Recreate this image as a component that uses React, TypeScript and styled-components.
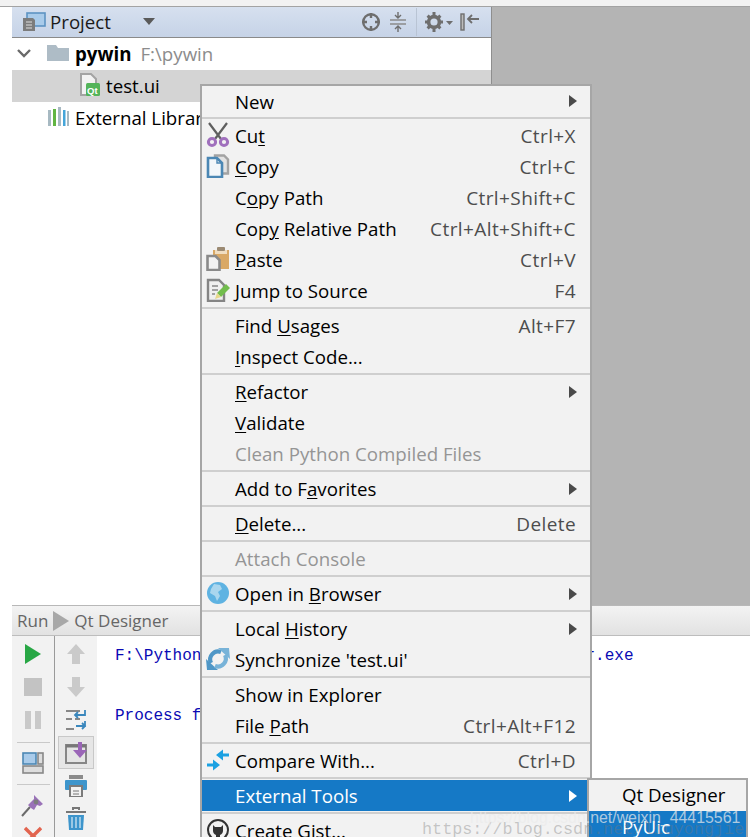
import React from "react";
import styled, { createGlobalStyle } from "styled-components";

const Global = createGlobalStyle`
  html, body { margin: 0; padding: 0; background: #fff; }
  body { font-family: "Open Sans", "Liberation Sans", sans-serif; }
  u { text-underline-offset: 2px; text-decoration-thickness: 1px; }
`;

const FONT = `"Open Sans", "Liberation Sans", sans-serif`;

const Page = styled.div`
  position: relative;
  width: 750px;
  height: 837px;
  overflow: hidden;
  background: #fff;
  font-family: ${FONT};
  font-size: 18.7px;
  color: #000;
`;
const TopStrip = styled.div`
  height: 6px;
  background: #f2f2f2;
`;
const Workspace = styled.div`
  display: flex;
  height: 599px;
  padding-left: 12px;
  border-top: 1px solid #a3a3a3;
  box-sizing: border-box;
`;
const ProjectPanel = styled.section`
  width: 479px;
  background: #fff;
  border-right: 1px solid #8e8e8e;
`;
const ProjectHeader = styled.header`
  height: 30px;
  display: flex;
  align-items: center;
  background: linear-gradient(#d6e0ef, #c6d3e7);
  border-bottom: 1px solid #8a8a8a;
`;
const HeaderIcons = styled.div`
  display: flex;
  align-items: center;
  margin-left: auto;
  padding-right: 11px;
  gap: 7px;
  color: #6e6e6e;
`;
const HeaderDivider = styled.span`
  width: 1px;
  height: 28px;
  background: #b9c4d4;
  margin: 0 1px;
`;
const HeaderTitle = styled.span`
  margin-left: 4px;
  width: 93px;
  color: #1a1a1a;
  line-height: 30px;
`;
const ProjectGlyph = styled.span`
  display: flex;
  margin-left: 10px;
`;
const TreeRow = styled.div<{ $selected?: boolean; $indent: number; $gap?: number }>`
  height: 32px;
  box-sizing: border-box;
  padding-bottom: 2px;
  display: flex;
  align-items: center;
  gap: ${(p) => p.$gap ?? 6}px;
  padding-left: ${(p) => p.$indent}px;
  background: ${(p) => (p.$selected ? "#d4d4d4" : "transparent")};
  white-space: nowrap;
`;
const ChevronGap = styled.span`
  width: 3px;
  flex: none;
`;
const Strong = styled.b`
  font-weight: 700;
`;
const PathHint = styled.span`
  color: #8c8c8c;
  margin-left: 3px;
`;
const GrayArea = styled.div`
  flex: 1;
  background: #b4b4b4;
`;
const RunPanel = styled.section`
  margin-left: 12px;
  border-top: 1px solid #b8b8b8;
`;
const RunHeader = styled.header`
  height: 30px;
  box-sizing: border-box;
  display: flex;
  align-items: center;
  gap: 5px;
  padding-left: 5px;
  color: #666;
  font-size: 17px;
  background: linear-gradient(#f3f3f3, #e2e2e2);
  border-bottom: 1px solid #bdbdbd;
`;
const RunBody = styled.div`
  display: flex;
  height: 202px;
`;
const ToolColumn = styled.div<{ $border?: boolean }>`
  width: 42px;
  flex: none;
  display: flex;
  flex-direction: column;
  align-items: center;
  padding-top: 1px;
  background: #f2f2f2;
  border-right: ${(p) => (p.$border ? "1px solid #9a9a9a" : "none")};
`;
const ToolSlot = styled.span<{ $h?: number; $active?: boolean }>`
  display: flex;
  align-items: center;
  justify-content: center;
  flex: none;
  height: ${(p) => p.$h ?? 33}px;
  width: ${(p) => (p.$active ? "36px" : "100%")};
  box-sizing: border-box;
  background: ${(p) => (p.$active ? "#e6e6e6" : "transparent")};
  border: ${(p) => (p.$active ? "1px solid #c8c8c8" : "none")};
`;
const ToolSeparator = styled.span<{ $top?: number }>`
  width: 33px;
  height: 1px;
  background: #c9c9c9;
  flex: none;
  margin: ${(p) => p.$top ?? 6}px 0 6px;
`;
const Console = styled.pre`
  margin: 0;
  padding: 5px 0 0 18px;
  font-family: "Liberation Mono", monospace;
  font-size: 16px;
  line-height: 30px;
  color: #0a0ab4;
  white-space: pre;
`;

const Menu = styled.nav`
  position: absolute;
  left: 200px;
  top: 84px;
  width: 392px;
  box-sizing: border-box;
  background: #f2f2f2;
  border: 2px solid #a6a6a6;
  border-bottom: 0;
  & > :first-child {
    height: 30px;
  }
`;
const MenuRow = styled.div<{ $active?: boolean; $disabled?: boolean }>`
  position: relative;
  height: 31px;
  display: flex;
  align-items: center;
  padding: 0 14px 0 33px;
  white-space: nowrap;
  background: ${(p) => (p.$active ? "#1579c6" : "transparent")};
  color: ${(p) => (p.$active ? "#fff" : p.$disabled ? "#959595" : "#000")};
`;
const Shortcut = styled.span`
  margin-left: auto;
  color: #4d4d4d;
  font-size: 19px;
  letter-spacing: 0.4px;
`;
const RowIcon = styled.span`
  position: absolute;
  left: 3px;
  top: 2px;
  width: 26px;
  height: 26px;
  display: flex;
  align-items: center;
  justify-content: center;
`;
const SubArrow = styled.span<{ $light?: boolean }>`
  margin-left: auto;
  margin-right: -1px;
  width: 0;
  height: 0;
  border-left: 8px solid ${(p) => (p.$light ? "#fff" : "#4a4a4a")};
  border-top: 6.5px solid transparent;
  border-bottom: 6.5px solid transparent;
`;
const MenuSeparator = styled.div`
  height: 4px;
  display: flex;
  align-items: center;
  &::after {
    content: "";
    flex: 1;
    height: 2px;
    background: #cfcfcf;
  }
`;
const Submenu = styled.nav`
  position: absolute;
  left: 587px;
  top: 778px;
  width: 161px;
  box-sizing: border-box;
  background: #f2f2f2;
  border: 2px solid #a6a6a6;
  border-bottom: 0;
`;
const SubRow = styled.div<{ $active?: boolean }>`
  height: ${(p) => (p.$active ? 30 : 31)}px;
  box-sizing: border-box;
  display: flex;
  align-items: center;
  padding-left: 33px;
  padding-bottom: ${(p) => (p.$active ? 0 : 2)}px;
  background: ${(p) => (p.$active ? "#1579c6" : "transparent")};
  color: ${(p) => (p.$active ? "#fff" : "#000")};
`;
const WatermarkSans = styled.div`
  position: absolute;
  left: 470px;
  top: 808px;
  font-family: "Liberation Sans", sans-serif;
  font-size: 15.9px;
  line-height: 20px;
  color: rgba(235, 235, 235, 0.72);
  white-space: nowrap;
`;
const WatermarkMono = styled.div`
  position: absolute;
  left: 422px;
  top: 820px;
  font-family: "Liberation Mono", monospace;
  font-size: 16.8px;
  line-height: 20px;
  color: rgba(120, 120, 120, 0.38);
  white-space: nowrap;
`;

const I = ({ w = 24, h = 24, children }: { w?: number; h?: number; children: React.ReactNode }) => (
  <svg width={w} height={h} viewBox={`0 0 ${w} ${h}`} fill="none">
    {children}
  </svg>
);

const Chevron = () => (
  <I w={16} h={10}>
    <path d="M2 2l6 6 6-6" stroke="#6a6a6a" strokeWidth="2.4" />
  </I>
);
const ProjectIcon = () => (
  <I w={24} h={20}>
    <rect x="5" y="1" width="18" height="13" fill="#a9cbea" stroke="#5d93c2" strokeWidth="1.6" />
    <path d="M1 6h10l2 2v11H1z" fill="#7c7c7c" />
    <path d="M4 10h6M4 13h6M4 16h6" stroke="#ddd" strokeWidth="1.2" />
  </I>
);
const Folder = () => (
  <I w={22} h={18}>
    <path d="M0 1h9l2 3h11v13H0z" fill="#aebcc6" />
  </I>
);
const QtFile = () => (
  <I w={20} h={24}>
    <path d="M1 1h10l5 5v16H1z" fill="#f2f2f2" stroke="#a3a3a3" strokeWidth="2" />
    <rect x="6" y="10" width="14" height="13" rx="1.5" fill="#54b45a" />
    <text x="7" y="20.5" fontSize="9.5" fontWeight="700" fill="#fff" fontFamily="Liberation Sans">Qt</text>
  </I>
);
const Library = () => (
  <I w={22} h={20}>
    <path d="M1 3h3v16H1z" fill="#a7b9c2" />
    <path d="M6 2h3v17H6z" fill="#62b543" />
    <path d="M11 0h3v19h-3z" fill="#a7b9c2" />
    <path d="M16 3h2.5v16H16z" fill="#45a5d9" />
    <path d="M20 4h2v15h-2z" fill="#a7b9c2" />
  </I>
);
const Target = () => (
  <I w={20} h={20}>
    <circle cx="10" cy="10" r="7.8" stroke="#6e6e6e" strokeWidth="2.4" />
    <path d="M10 1v5M10 14v5M1 10h5M14 10h5" stroke="#6e6e6e" strokeWidth="2.4" />
  </I>
);
const Collapse = () => (
  <I w={20} h={22}>
    <path d="M2 9h16M2 13h16" stroke="#8a8a8a" strokeWidth="1.4" />
    <path d="M10 1v5M7 4l3 3 3-3M10 21v-5M7 18l3-3 3 3" stroke="#6e6e6e" strokeWidth="1.4" />
  </I>
);
const Gear = () => (
  <I w={28} h={20}>
    <circle cx="9" cy="10" r="5.4" stroke="#6e6e6e" strokeWidth="3.6" />
    <path d="M9 0v4M9 16v4M0 10h4M14 10h4M2.6 3.6l3 3M12.4 13.4l3 3M15.4 3.6l-3 3M5.6 13.4l-3 3" stroke="#6e6e6e" strokeWidth="3" />
    <path d="M21 9h7l-3.5 4z" fill="#6e6e6e" />
  </I>
);
const HideIcon = () => (
  <I w={20} h={18}>
    <rect x="1" y="1" width="3" height="16" fill="#bcbcbc" stroke="#6e6e6e" strokeWidth="1.4" />
    <path d="M19 6H8M12 2L8 6l4 4" stroke="#6e6e6e" strokeWidth="1.8" />
  </I>
);
const Scissors = () => (
  <I w={26} h={26}>
    <path d="M4 1l12 16M22 1L10 17" stroke="#5f5f5f" strokeWidth="2.2" />
    <circle cx="7" cy="20" r="3.6" stroke="#a070bd" strokeWidth="3" />
    <circle cx="19" cy="20" r="3.6" stroke="#a070bd" strokeWidth="3" />
  </I>
);
const CopyIcon = () => (
  <I w={24} h={24}>
    <path d="M9 1.5h9l4 4v14H9z" fill="#e2e2e2" stroke="#a3a3a3" strokeWidth="2.4" />
    <path d="M2 4h9l5 5v14H2z" fill="#f3f7fa" stroke="#4b87b4" strokeWidth="2.6" />
    <path d="M11 4v5h5" stroke="#4b87b4" strokeWidth="1.4" />
  </I>
);
const PasteIcon = () => (
  <I w={24} h={24}>
    <path d="M7 3h16v19H7z" fill="#d9a865" />
    <path d="M9 3h12v4H9z" fill="#f0ddc0" />
    <rect x="11" y="0" width="8" height="4" rx="1" fill="#9b8a73" />
    <path d="M1.5 9h8l4 4v10h-12z" fill="#f2f2f2" stroke="#8a8a8a" strokeWidth="2.6" />
  </I>
);
const JumpIcon = () => (
  <I w={24} h={24}>
    <path d="M2 2h11l5 5v16H2z" fill="#efefef" stroke="#858585" strokeWidth="2.4" />
    <path d="M6 8h6M6 12h6M6 16h3" stroke="#888" strokeWidth="1.6" />
    <path d="M11 15l9-9 4 4-9 9z" fill="#72bd4d" />
    <path d="M11 15l4 4-6 2z" fill="#e8d88a" />
  </I>
);
const Globe = () => (
  <I w={24} h={24}>
    <circle cx="12" cy="12" r="11" fill="#5fb3e2" />
    <path d="M8 3l6 1 2 4-4 3 2 4-3 5-2-5-5-3 1-4z" fill="#aad6ee" />
  </I>
);
const SyncIcon = () => (
  <I w={24} h={24}>
    <path d="M15 5A8 8 0 0 0 5 16" stroke="#4f97c7" strokeWidth="4.2" />
    <path d="M0 12l12 11H1z" fill="#4f97c7" />
    <path d="M9 19a8 8 0 0 0 10-11" stroke="#78b3d8" strokeWidth="4.2" />
    <path d="M24 12L12 1h11z" fill="#78b3d8" />
  </I>
);
const CompareIcon = () => (
  <I w={24} h={24}>
    <path d="M10 7l7-5.5V5.5h6v3h-6v4z" fill="#1ba1e2" />
    <path d="M14 17l-7-5.5v4H1v3h6v4z" fill="#1ba1e2" />
  </I>
);
const OctoCat = () => (
  <I w={24} h={24}>
    <circle cx="12" cy="12" r="10" stroke="#333" strokeWidth="2" />
    <path d="M7 7l2 2h6l2-2v5a5 5 0 0 1-3 5v4h-4v-4a5 5 0 0 1-3-5z" fill="#333" />
  </I>
);

const Play = () => (
  <I w={18} h={22}>
    <path d="M1 1l16 10L1 21z" fill="#28a745" />
  </I>
);
const Stop = () => (
  <I w={18} h={18}>
    <rect width="18" height="18" fill="#c3c3c3" />
  </I>
);
const Pause = () => (
  <I w={16} h={18}>
    <path d="M0 0h6v18H0zM10 0h6v18h-6z" fill="#c9c9c9" />
  </I>
);
const LayoutIcon = () => (
  <I w={22} h={22}>
    <rect x="1" y="1" width="13" height="11" fill="#a9cbea" stroke="#4b87b4" strokeWidth="1.6" />
    <rect x="16" y="1" width="5" height="11" fill="#ddd" stroke="#888" strokeWidth="1.6" />
    <rect x="1" y="14" width="20" height="7" fill="#ddd" stroke="#888" strokeWidth="1.6" />
  </I>
);
const Pin = () => (
  <I w={24} h={24}>
    <path d="M1 23l8-9" stroke="#6a6a6a" strokeWidth="2" />
    <path d="M13 2l9 9-3 2-3-1-3 5-3-2-3-3 3-3 2-2 1-1z" fill="#9a72b8" />
    <circle cx="15" cy="9" r="2.4" fill="#7d7d7d" />
  </I>
);
const CloseX = () => (
  <I w={18} h={14}>
    <path d="M1 2l8 8 8-8M1 18l8-8 8 8" stroke="#e2644f" strokeWidth="3.4" />
  </I>
);
const Up = () => (
  <I w={18} h={20}>
    <path d="M9 0l9 10h-5v10H5V10H0z" fill="#cacaca" />
  </I>
);
const Down = () => (
  <I w={18} h={20}>
    <path d="M9 20L0 10h5V0h8v10h5z" fill="#cacaca" />
  </I>
);
const WrapIcon = () => (
  <I w={22} h={22}>
    <path d="M1 2h14M1 10h6M10 10h5M1 20h8" stroke="#666" strokeWidth="1.7" />
    <path d="M20 1v5H10M13 3l-3 3 3 3M20 12v5H11M17 20l3-3-3-3" stroke="#3a87bd" strokeWidth="1.8" />
  </I>
);
const ScrollIcon = () => (
  <I w={22} h={22}>
    <rect x="1" y="3" width="20" height="18" fill="#e4e4e4" stroke="#868686" strokeWidth="2" />
    <path d="M1 4h20" stroke="#777" strokeWidth="3" />
    <path d="M13 0h4v8h5l-7 8-7-8h5z" fill="#9a65b7" />
  </I>
);
const PrintIcon = () => (
  <I w={22} h={22}>
    <rect x="4" y="0" width="14" height="4" fill="#8b8b8b" />
    <rect x="0" y="5" width="22" height="10" rx="1" fill="#3d95cc" />
    <rect x="5" y="11" width="12" height="11" fill="#f1f1f1" stroke="#7b7b7b" strokeWidth="2" />
    <path d="M8 16h6M8 19h6" stroke="#777" />
  </I>
);
const TrashIcon = () => (
  <I w={22} h={24}>
    <path d="M8 3V1h6v2M1 5h20" stroke="#777" strokeWidth="2" />
    <path d="M3 8h16l-1 15H4z" fill="#3d95cc" />
    <path d="M7 10v11M11 10v11M15 10v11" stroke="#cfe5f3" strokeWidth="1.3" />
  </I>
);

type Item = { label: React.ReactNode; shortcut?: string; icon?: React.ReactNode; arrow?: boolean; disabled?: boolean; active?: boolean };

const groups: Item[][] = [
  [{ label: "New", arrow: true }],
  [
    { label: <>Cu<u>t</u></>, shortcut: "Ctrl+X", icon: <Scissors /> },
    { label: <><u>C</u>opy</>, shortcut: "Ctrl+C", icon: <CopyIcon /> },
    { label: <>C<u>o</u>py Path</>, shortcut: "Ctrl+Shift+C" },
    { label: <>Cop<u>y</u> Relative Path</>, shortcut: "Ctrl+Alt+Shift+C" },
    { label: <><u>P</u>aste</>, shortcut: "Ctrl+V", icon: <PasteIcon /> },
    { label: "Jump to Source", shortcut: "F4", icon: <JumpIcon /> },
  ],
  [
    { label: <>Find <u>U</u>sages</>, shortcut: "Alt+F7" },
    { label: <><u>I</u>nspect Code...</> },
  ],
  [
    { label: <><u>R</u>efactor</>, arrow: true },
    { label: <><u>V</u>alidate</> },
    { label: "Clean Python Compiled Files", disabled: true },
  ],
  [{ label: <>Add to F<u>a</u>vorites</>, arrow: true }],
  [{ label: <><u>D</u>elete...</>, shortcut: "Delete" }],
  [{ label: "Attach Console", disabled: true }],
  [{ label: <>Open in <u>B</u>rowser</>, arrow: true, icon: <Globe /> }],
  [
    { label: <>Local <u>H</u>istory</>, arrow: true },
    { label: "Synchronize 'test.ui'", icon: <SyncIcon /> },
  ],
  [
    { label: "Show in Explorer" },
    { label: <>File <u>P</u>ath</>, shortcut: "Ctrl+Alt+F12" },
  ],
  [{ label: "Compare With...", shortcut: "Ctrl+D", icon: <CompareIcon /> }],
  [{ label: "External Tools", arrow: true, active: true }],
  [{ label: "Create Gist...", icon: <OctoCat /> }],
];

export default function App() {
  return (
    <Page>
      <Global />
      <TopStrip />
      <Workspace>
        <ProjectPanel>
          <ProjectHeader>
            <ProjectGlyph><ProjectIcon /></ProjectGlyph>
            <HeaderTitle>Project</HeaderTitle>
            <I w={12} h={8}><path d="M0 0h12L6 7z" fill="#5a5a5a" /></I>
            <HeaderIcons>
              <Target />
              <Collapse />
              <HeaderDivider />
              <Gear />
              <HideIcon />
            </HeaderIcons>
          </ProjectHeader>
          <TreeRow $indent={4}>
            <Chevron />
            <ChevronGap />
            <Folder />
            <Strong>pywin</Strong>
            <PathHint>F:\pywin</PathHint>
          </TreeRow>
          <TreeRow $selected $indent={68}>
            <QtFile />
            <span>test.ui</span>
          </TreeRow>
          <TreeRow $indent={35}>
            <Library />
            <span>External Libraries</span>
          </TreeRow>
        </ProjectPanel>
        <GrayArea />
      </Workspace>
      <RunPanel>
        <RunHeader>
          <span>Run</span>
          <I w={16} h={20}><path d="M0 0l16 10L0 20z" fill="#a8a8a8" /></I>
          <span>Qt Designer</span>
        </RunHeader>
        <RunBody>
          <ToolColumn $border>
            <ToolSlot><Play /></ToolSlot>
            <ToolSlot><Stop /></ToolSlot>
            <ToolSlot><Pause /></ToolSlot>
            <ToolSeparator />
            <ToolSlot $h={27}><LayoutIcon /></ToolSlot>
            <ToolSeparator $top={8} />
            <ToolSlot $h={27}><Pin /></ToolSlot>
            <ToolSlot $h={30}><CloseX /></ToolSlot>
          </ToolColumn>
          <ToolColumn>
            <ToolSlot><Up /></ToolSlot>
            <ToolSlot><Down /></ToolSlot>
            <ToolSlot><WrapIcon /></ToolSlot>
            <ToolSlot $active><ScrollIcon /></ToolSlot>
            <ToolSlot><PrintIcon /></ToolSlot>
            <ToolSlot><TrashIcon /></ToolSlot>
          </ToolColumn>
          <Console>{"F:\\Python36\\Lib\\site-packages\\pyqt5-tools\\designer.exe\n\nProcess finished with exit code 0"}</Console>
        </RunBody>
      </RunPanel>

      <Menu>
        {groups.map((g, i) => (
          <React.Fragment key={i}>
            {i > 0 && <MenuSeparator />}
            {g.map((it, j) => (
              <MenuRow key={j} $active={it.active} $disabled={it.disabled}>
                {it.icon && <RowIcon>{it.icon}</RowIcon>}
                <span>{it.label}</span>
                {it.shortcut && <Shortcut>{it.shortcut}</Shortcut>}
                {it.arrow && <SubArrow $light={it.active} />}
              </MenuRow>
            ))}
          </React.Fragment>
        ))}
      </Menu>
      <Submenu>
        <SubRow>Qt Designer</SubRow>
        <SubRow $active>PyUic</SubRow>
      </Submenu>
      <WatermarkMono>https://blog.csdn.net/liuyongjie</WatermarkMono>
      <WatermarkSans>https://blog.csdn.net/weixin_44415561</WatermarkSans>
    </Page>
  );
}
